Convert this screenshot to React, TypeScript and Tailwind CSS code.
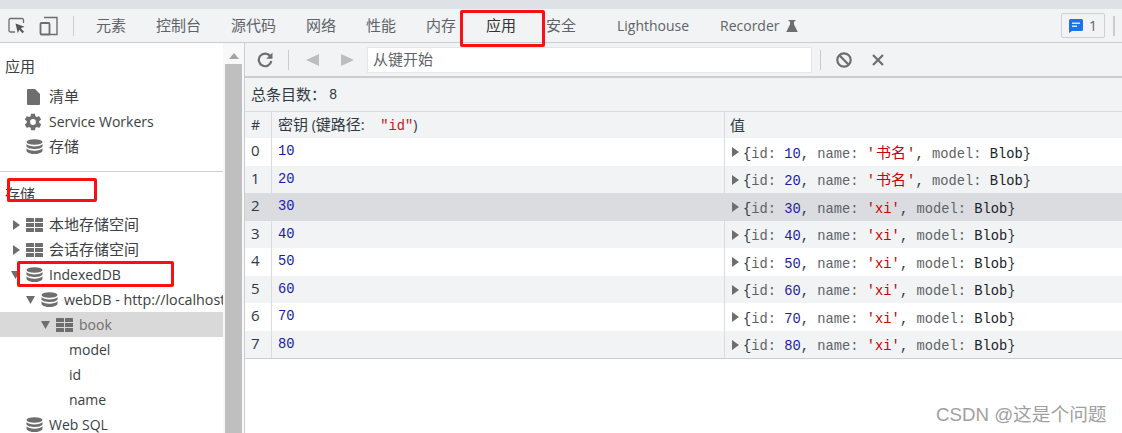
import React from "react";

const SANS = "font-['Open_Sans','Noto_Sans_CJK_SC',sans-serif]";
const MONO = "font-['Liberation_Mono','Noto_Sans_CJK_SC',monospace]";

function Zh({ children }: { children: React.ReactNode }) {
  return <span className="text-[15px]">{children}</span>;
}

function Db({ className = "" }: { className?: string }) {
  return (
    <svg width="17" height="16" viewBox="0 0 17 16" className={`shrink-0 ${className}`} fill="#6e6e6e">
      <ellipse cx="8.500" cy="3" rx="8" ry="2.800" />
      <path d="M.5 5c1 1.700 4.500 2.400 8 2.400s7-.7 8-2.400v2.400c-.8 1.700-4.500 2.500-8 2.500s-7.200-.8-8-2.500z" />
      <path d="M.5 9.300c1 1.700 4.500 2.400 8 2.400s7-.7 8-2.400v2.600c-.8 1.900-4.500 3.100-8 3.100s-7.200-1.200-8-3.100z" />
    </svg>
  );
}

function TableIcon() {
  return (
    <svg width="17" height="14" viewBox="0 0 17 14" fill="#6e6e6e" className="shrink-0">
      <rect x="0" y="0" width="8" height="4" rx="0.500" />
      <rect x="9" y="0" width="8" height="4" rx="0.500" />
      <rect x="0" y="5" width="8" height="4" />
      <rect x="9" y="5" width="8" height="4" />
      <rect x="0" y="10" width="8" height="4" rx="0.500" />
      <rect x="9" y="10" width="8" height="4" rx="0.500" />
    </svg>
  );
}

function Tri({ open = false, color = "#6e6e6e" }: { open?: boolean; color?: string }) {
  return (
    <svg width="9" height="10" viewBox="0 0 9 10" fill={color} className="shrink-0">
      {open ? <path d="M0 1h9L4.500 9z" /> : <path d="M1 0l7 5-7 5z" />}
    </svg>
  );
}

function SideRow({
  left,
  children,
  selected = false,
  textClass = "",
}: {
  left: number;
  children: React.ReactNode;
  selected?: boolean;
  textClass?: string;
}) {
  return (
    <div
      className={`flex h-[25px] shrink-0 items-center whitespace-nowrap overflow-hidden ${selected ? "bg-[#d9d9d9]" : ""} ${textClass}`}
      style={{ paddingLeft: left }}
    >
      {children}
    </div>
  );
}

const tabs = [
  { t: "元素", cls: "w-[60px]" },
  { t: "控制台", cls: "w-[75px]" },
  { t: "源代码", cls: "w-[75px]" },
  { t: "网络", cls: "w-[60px]" },
  { t: "性能", cls: "w-[60px]" },
  { t: "内存", cls: "w-[60px]" },
];

const rows = [
  ["0", "10", "书名", 28],
  ["1", "20", "书名", 27],
  ["2", "30", "xi", 28],
  ["3", "40", "xi", 27],
  ["4", "50", "xi", 28],
  ["5", "60", "xi", 27],
  ["6", "70", "xi", 28],
  ["7", "80", "xi", 27],
] as const;

export default function App() {
  return (
    <div className={`relative flex h-[433px] w-[1122px] flex-col overflow-hidden bg-white text-[14px] text-[#3c4043] ${SANS}`}>
      <div className="h-[9px] shrink-0 bg-[#dee1e6]" />

      {/* tab bar */}
      <div className="flex h-[34px] shrink-0 items-center border-b border-[#cacdd1] bg-[#f1f3f4] text-[#5f6368]">
        <div className="flex w-[81px] shrink-0 items-center pl-[8px]">
          <svg width="18" height="18" viewBox="0 0 18 18" fill="none">
            <path d="M7 15H2.500A1.500 1.500 0 0 1 1 13.500V3a1.500 1.500 0 0 1 1.500-1.500H14A1.500 1.500 0 0 1 15.500 3v3" stroke="#6e6e6e" strokeWidth="1.300" />
            <path d="M7.500 6.500l9 3.300-3.700 1.500 3.200 3.500-1.500 1.400-3.200-3.500-1.500 3.500z" fill="#555" />
          </svg>
          <svg width="20" height="20" viewBox="0 0 20 20" fill="none" className="ml-[13px]">
            <path d="M5 1.500h13v17H9" stroke="#6e6e6e" strokeWidth="1.400" />
            <rect x="1.500" y="7" width="9" height="11.500" rx="1" stroke="#6e6e6e" strokeWidth="1.800" />
          </svg>
          <div className="ml-[14px] h-[20px] w-px bg-[#ccc]" />
        </div>
        <div className="flex items-center text-[15px]">
          {tabs.map((x) => (
            <div key={x.t} className={`${x.cls} text-center`}>{x.t}</div>
          ))}
          <div className="relative w-[60px] text-center text-[#333]">
            应用
            <div className="absolute bottom-[-10px] left-0 h-[3px] w-full bg-[#1a73e8]" />
          </div>
          <div className="w-[86px] pl-[15px]">安全</div>
          <div className="w-[103px] whitespace-nowrap text-[14px]">Lighthouse</div>
          <div className="flex items-center whitespace-nowrap text-[14px]">
            Recorder
            <svg width="12" height="12" viewBox="0 0 12 12" fill="#6e6e6e" className="ml-[6px]">
              <path d="M2.500 0h7v1.300H8v3.200l3.800 7.500H.2L4 4.500V1.300H2.500z" />
            </svg>
          </div>
        </div>
        <div className="ml-auto flex items-center pr-[7px]">
          <div className="flex h-[25px] w-[44px] items-center justify-center gap-[6px] rounded-[2px] border border-[#cdd0d4]">
            <svg width="14" height="14" viewBox="0 0 14 14">
              <path d="M1.500 0h11A1.500 1.500 0 0 1 14 1.500v9a1.500 1.500 0 0 1-1.500 1.500H3L0 14V1.500A1.500 1.500 0 0 1 1.500 0z" fill="#1a73e8" />
              <rect x="3" y="3.500" width="8" height="1.500" fill="#d2e3fc" />
              <rect x="3" y="6.500" width="5" height="1.500" fill="#d2e3fc" />
            </svg>
            <span className="text-[14px]">1</span>
          </div>
          <div className="ml-[8px] h-[20px] w-[2px] bg-[#ccc]" />
        </div>
      </div>

      <div className="flex min-h-0 flex-1">
        {/* sidebar */}
        <aside className="flex w-[223px] shrink-0 flex-col overflow-hidden">
          <div className="flex h-[41px] shrink-0 items-start pl-[5px] pt-[12px]"><Zh>应用</Zh></div>
          <SideRow left={27}>
            <svg width="13" height="16" viewBox="0 0 13 16" fill="#6e6e6e" className="shrink-0"><path d="M1 0h7l5 5v10a1 1 0 0 1-1 1H1a1 1 0 0 1-1-1V1a1 1 0 0 1 1-1z" /></svg>
            <span className="ml-[9px]"><Zh>清单</Zh></span>
          </SideRow>
          <SideRow left={23}>
            <svg width="20" height="20" viewBox="0 0 24 24" fill="#6e6e6e" className="shrink-0"><path d="M19.400 13c.04-.32.06-.66.06-1s-.02-.68-.06-1l2.100-1.650a.5.500 0 0 0 .12-.64l-2-3.460a.5.500 0 0 0-.6-.22l-2.500 1a7.300 7.300 0 0 0-1.700-1l-.38-2.650A.5.500 0 0 0 14 2h-4a.5.500 0 0 0-.5.420L9.140 5.070a7.700 7.700 0 0 0-1.700 1l-2.500-1a.5.500 0 0 0-.6.220l-2 3.460a.5.500 0 0 0 .12.640L4.600 11c-.04.320-.07.660-.07 1s.03.680.07 1l-2.100 1.650a.5.500 0 0 0-.12.640l2 3.460c.12.220.38.300.6.220l2.500-1c.52.400 1.080.730 1.700 1l.38 2.650c.03.240.24.420.5.420h4c.25 0 .46-.18.5-.42l.37-2.650a7.700 7.700 0 0 0 1.700-1l2.500 1c.22.080.48 0 .6-.22l2-3.460a.5.500 0 0 0-.12-.64zM12 15.500a3.500 3.500 0 1 1 0-7 3.500 3.500 0 0 1 0 7z" /></svg>
            <span className="ml-[6px]">Service Workers</span>
          </SideRow>
          <SideRow left={26}>
            <Db />
            <span className="ml-[6px]"><Zh>存储</Zh></span>
          </SideRow>
          <div className="mt-[12px] h-px shrink-0 bg-[#cacdd1]" />
          <div className="flex h-[40px] shrink-0 items-start pl-[5px] pt-[11px]"><Zh>存储</Zh></div>
          <SideRow left={12}><Tri /><span className="ml-[5px] flex"><TableIcon /></span><span className="ml-[6px]"><Zh>本地存储空间</Zh></span></SideRow>
          <SideRow left={12}><Tri /><span className="ml-[5px] flex"><TableIcon /></span><span className="ml-[6px]"><Zh>会话存储空间</Zh></span></SideRow>
          <SideRow left={11}><Tri open /><Db className="ml-[6px]" /><span className="ml-[6px]">IndexedDB</span></SideRow>
          <SideRow left={26}><Tri open /><Db className="ml-[6px]" /><span className="ml-[6px] text-[14.3px]">webDB - http://localhost</span></SideRow>
          <SideRow left={41} selected textClass="text-[#6e6e6e]"><Tri open /><span className="ml-[6px] flex"><TableIcon /></span><span className="ml-[6px]">book</span></SideRow>
          <SideRow left={69}>model</SideRow>
          <SideRow left={69}>id</SideRow>
          <SideRow left={69}>name</SideRow>
          <SideRow left={26}><Db /><span className="ml-[6px]">Web SQL</span></SideRow>
        </aside>

        {/* scrollbar */}
        <div className="flex w-[22px] shrink-0 flex-col items-center border-r border-[#cacdd1] bg-[#f8f8f8]">
          <svg width="10" height="6" viewBox="0 0 10 6" fill="#a3a3a3" className="mt-[10px] shrink-0"><path d="M5 0l5 6H0z" /></svg>
          <div className="mt-[5px] w-[17px] flex-1 bg-[#bfbfbf]" />
        </div>

        {/* main */}
        <main className="flex min-w-0 flex-1 flex-col">
          <div className="flex h-[33px] shrink-0 items-center bg-[#f1f3f4]">
            <svg width="16" height="16" viewBox="0 0 16 16" fill="none" className="ml-[12px]">
              <path d="M13.200 4.200A6.300 6.300 0 1 0 14.300 9" stroke="#6e6e6e" strokeWidth="2.200" />
              <path d="M15.500 0.500v6.300H9.200z" fill="#6e6e6e" />
            </svg>
            <div className="ml-[15px] h-[20px] w-px bg-[#ccc]" />
            <svg width="13" height="12" viewBox="0 0 13 12" fill="#bdbdbd" className="ml-[17px]"><path d="M0 6l13-6v12z" /></svg>
            <svg width="13" height="12" viewBox="0 0 13 12" fill="#bdbdbd" className="ml-[22px]"><path d="M13 6L0 0v12z" /></svg>
            <div className="ml-[13px] flex h-[26px] w-[445px] items-center border border-[#e4e6e8] bg-white pl-[5px] text-[#5f6368]"><Zh>从键开始</Zh></div>
            <div className="ml-[8px] h-[20px] w-px bg-[#ccc]" />
            <svg width="16" height="16" viewBox="0 0 16 16" fill="none" stroke="#6e6e6e" strokeWidth="2.200" className="ml-[15px]">
              <circle cx="8" cy="8" r="6.700" />
              <path d="M3.300 3.300l9.400 9.400" />
            </svg>
            <svg width="12" height="12" viewBox="0 0 12 12" fill="none" stroke="#6e6e6e" strokeWidth="2.200" className="ml-[20px]"><path d="M1 1l10 10M11 1L1 11" /></svg>
          </div>
          <div className="h-[2px] shrink-0 bg-[#cacdd1]" />
          <div className="flex h-[33px] shrink-0 items-center bg-[#f1f3f4] pl-[6px] text-[#303942]">
            <Zh>总条目数：</Zh><span className={`ml-[3px] pt-[3px] ${MONO} text-[13.75px]`}>8</span>
          </div>
          <div className="grid shrink-0 grid-cols-[27px_453px_1fr] border-b border-[#cacdd1] text-[#303942]">
            <div className="flex h-[27px] items-center border-r border-t border-[#dadce0] bg-[#f1f3f4] pb-[2px] pl-[6px]">#</div>
            <div className="flex h-[27px] items-center border-r border-t border-[#dadce0] bg-[#f1f3f4] pl-[6px]">
              <span className="whitespace-pre">
                <Zh>密钥</Zh> (<Zh>键路径:</Zh><span className={`-ml-px ${MONO} text-[13.75px] text-[#c41a16]`}>  "id"</span>)
              </span>
            </div>
            <div className="flex h-[27px] items-center border-t border-[#dadce0] bg-[#f1f3f4] pl-[5px]"><Zh>值</Zh></div>
            {rows.map(([i, k, n, h], idx) => {
              const bg = idx === 2 ? "bg-[#dadce0]" : idx % 2 === 0 ? "bg-white" : "bg-[#f1f3f4]";
              const ht = h === 28 ? "h-[28px]" : "h-[27px]";
              return (
                <React.Fragment key={i}>
                  <div className={`${ht} ${bg} flex items-center border-r border-[#dadce0] pb-[3px] pl-[6px] text-[15px]`}>{i}</div>
                  <div className={`${ht} ${bg} flex items-center border-r border-[#dadce0] pl-[6px] pt-[1px] ${MONO} text-[13.75px] text-[#1a1aa6]`}>{k}</div>
                  <div className={`${ht} ${bg} flex items-center gap-[3px] pl-[6px] ${MONO} text-[13.75px] whitespace-pre`}>
                    <Tri />
                    <span className="pt-[6px]">
                      <span className="text-[#303942]">{"{"}</span>
                      <span className="text-[#5f6368]">id: </span>
                      <span className="text-[#1a1aa6]">{k}</span>
                      <span className="text-[#303942]">, </span>
                      <span className="text-[#5f6368]">name: </span>
                      <span className="text-[#c80000]">'{n === "xi" ? n : <span className="mx-px text-[15px]">{n}</span>}'</span>
                      <span className="text-[#303942]">, </span>
                      <span className="text-[#5f6368]">model: </span>
                      <span className="text-[#202124]">Blob</span>
                      <span className="text-[#303942]">{"}"}</span>
                    </span>
                  </div>
                </React.Fragment>
              );
            })}
          </div>
        </main>
      </div>

      {/* annotations */}
      <div className="absolute left-[460px] top-[10px] h-[37px] w-[85px] rounded-[2px] border-[3px] border-[#fb0f0f]" />
      <div className="absolute left-[7px] top-[178px] h-[24px] w-[90px] rounded-[2px] border-[3px] border-[#fb0f0f]" />
      <div className="absolute left-[17px] top-[261px] h-[26px] w-[157px] rounded-[2px] border-[3px] border-[#fb0f0f]" />
      <div className="absolute left-[936px] top-[401px] whitespace-nowrap text-[18.7px] text-[#a0a0a0] font-['Liberation_Sans','Noto_Sans_CJK_SC',sans-serif]">CSDN @这是个问题</div>
    </div>
  );
}
